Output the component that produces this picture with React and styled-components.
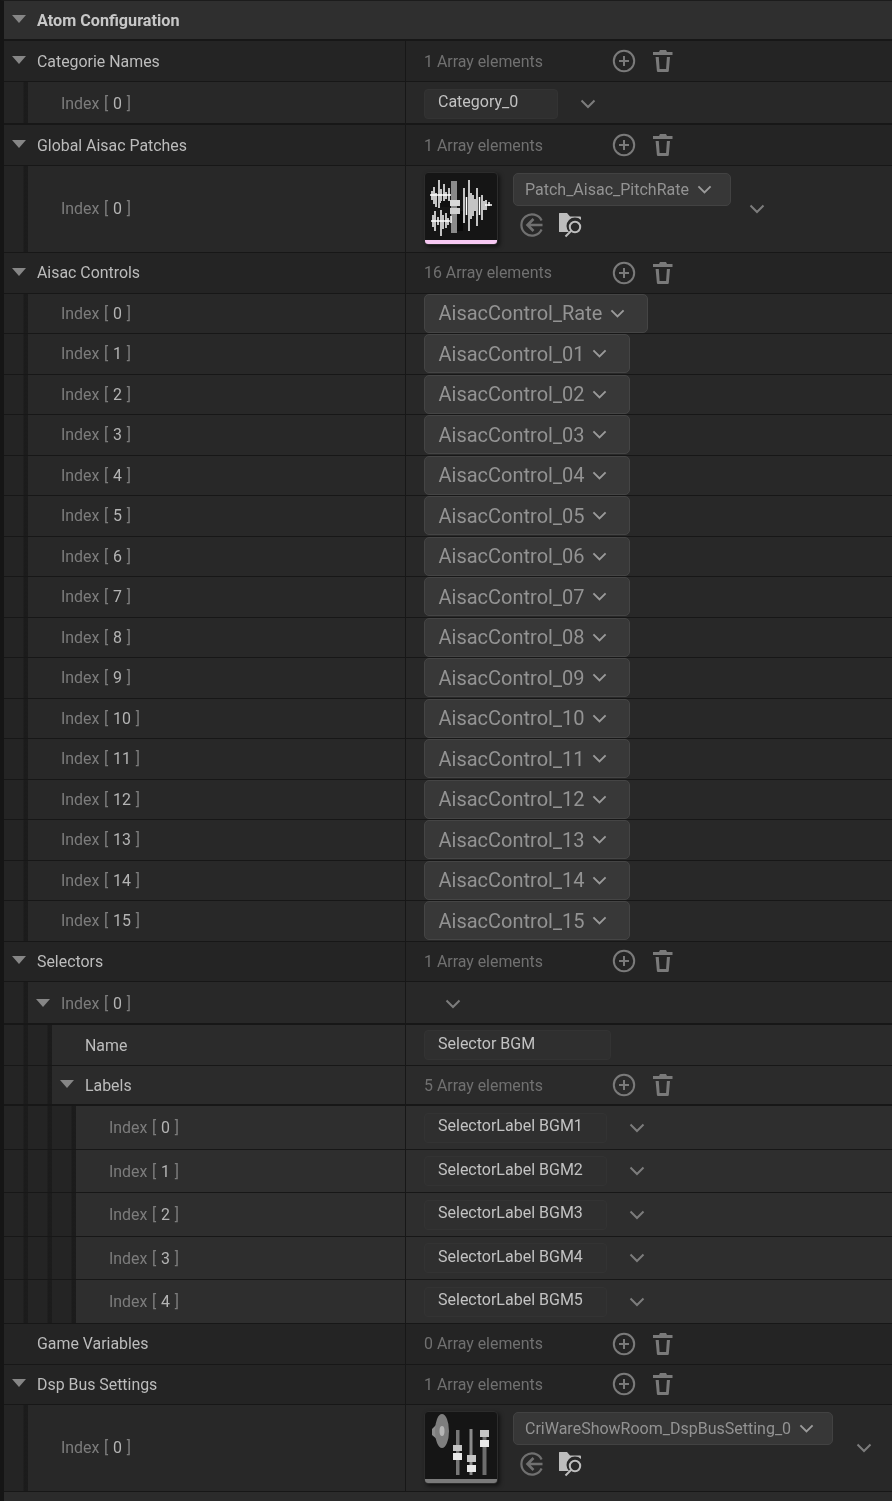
import React from "react";
import styled, { createGlobalStyle } from "styled-components";

const Global = createGlobalStyle`
  html, body { margin: 0; padding: 0; background: #2b2b2b; }
  body { font-family: Roboto, "Liberation Sans", sans-serif; overflow: hidden; }
  * { box-sizing: border-box; }
`;

const Panel = styled.div`
  width: 892px;
  height: 1501px;
  overflow: hidden;
  border-left: 4px solid #151515;
  border-top: 1px solid #1c1c1c;
  display: flex;
  flex-direction: column;
  filter: blur(0.35px);
`;

const Header = styled.div`
  height: 40px;
  flex: none;
  display: flex;
  align-items: center;
  padding-left: 8px;
  background: #2f2f2f;
  border-bottom: 2px solid #171717;
`;

const HeaderTitle = styled.span`
  font-size: 16.2px;
  font-weight: 700;
  color: #c8c8c8;
`;

const Row = styled.div`
  height: ${(p) => p.$h}px;
  flex: none;
  display: flex;
  background: ${(p) => p.$bg};
  border-bottom: ${(p) => p.$line || 1}px solid #171717;
`;

const Gutter = styled.div`
  width: 24px;
  flex: none;
  background: linear-gradient(to right, #242424 0, #242424 19px, #1b1b1b 20px, #1c1c1c 24px);
`;

const NameCell = styled.div`
  flex: 1;
  min-width: 0;
  display: flex;
  align-items: center;
  padding-left: 8px;
  padding-top: ${(p) => p.$nudge || 0}px;
  border-right: 1px solid #171717;
`;

const NameArea = styled.div`
  width: 402px;
  flex: none;
  display: flex;
`;

const Arrow = styled.span`
  width: 0;
  height: 0;
  margin-right: 11px;
  border-left: 7.5px solid transparent;
  border-right: 7.5px solid transparent;
  border-top: 8px solid #868686;
  flex: none;
  margin-top: -2px;
`;

const Spacer = styled.span`
  width: 25px;
  flex: none;
`;

const Label = styled.span`
  font-size: 15.9px;
  color: ${(p) => (p.$index ? "#7c7c7c" : "#bcbcbc")};
  white-space: pre;
  word-spacing: ${(p) => (p.$index ? "0.8px" : "0")};
`;

const Digit = styled.span`
  color: #b4b4b4;
`;

const ValueCell = styled.div`
  flex: 1;
  min-width: 0;
  display: flex;
  align-items: center;
  padding-left: 18px;
  padding-top: ${(p) => p.$nudge || 0}px;
`;

const Count = styled.span`
  width: 188px;
  flex: none;
  font-size: 15.9px;
  color: #707070;
`;

const Tools = styled.div`
  display: flex;
  align-items: center;
  gap: 16px;
`;

const TextBox = styled.div`
  width: ${(p) => p.$w}px;
  height: 30px;
  flex: none;
  display: flex;
  padding: 0 0 4px 13px;
  align-items: center;
  font-size: 16px;
  color: #c2c2c2;
  background: #2f2f2f;
  border: 1px solid #333333;
  border-radius: 4px;
`;

const BigCombo = styled.div`
  height: 39px;
  flex: none;
  display: inline-flex;
  align-items: center;
  gap: 8px;
  padding: 0 21.5px 0 13.5px;
  font-size: 20px;
  color: #939393;
  background: #383838;
  border: 1.5px solid #454545;
  border-radius: 5px;
`;

const SmallCombo = styled.div`
  height: 33px;
  display: inline-flex;
  align-items: center;
  gap: 8px;
  padding: 0 18px 0 11px;
  font-size: 16px;
  color: #939393;
  background: #373737;
  border: 1.5px solid #424242;
  border-radius: 5px;
`;

const Asset = styled.div`
  display: flex;
  align-items: flex-start;
`;

const Thumb = styled.div`
  width: 74px;
  height: 73px;
  flex: none;
  position: relative;
  overflow: hidden;
  background: #151515;
  border: 1px solid #2c2c2c;
  border-radius: 4px;
  box-shadow: 2px 2px 4px rgba(0, 0, 0, 0.55);
`;

const ThumbBar = styled.div`
  position: absolute;
  left: 0;
  right: 0;
  bottom: 0;
  height: 4px;
  background: ${(p) => p.$color};
`;

const AssetBody = styled.div`
  margin: 1px 0 0 15px;
  display: flex;
  flex-direction: column;
  align-items: flex-start;
`;

const AssetTools = styled.div`
  display: flex;
  align-items: center;
  gap: 14px;
  margin: 6px 0 0 7px;
`;

const MoreChevron = styled.span`
  display: inline-flex;
  flex: none;
  margin-left: ${(p) => p.$ml}px;
`;

const Svg = styled.svg`
  display: block;
  flex: none;
`;

const ThumbArt = styled.svg`
  display: block;
  filter: blur(0.4px);
`;

const Chevron = ({ color = "#7c7c7c", w = 16, sw = 2 }) => (
  <Svg width={w} height={w * 0.625} viewBox="0 0 16 10" fill="none" stroke={color} strokeWidth={sw}>
    <path d="M1.5 1.5 L8 8 L14.5 1.5" />
  </Svg>
);

const AddIcon = () => (
  <Svg width="24" height="24" viewBox="0 0 24 24" fill="none" stroke="#7a7a7a" strokeWidth="2">
    <circle cx="12" cy="12" r="10.2" />
    <path d="M12 7 V17 M7 12 H17" />
  </Svg>
);

const TrashIcon = () => (
  <Svg width="22" height="24" viewBox="0 0 22 24" fill="none">
    <path d="M8 1 H14 L15 3 H20.5 V6 H1 V3 H7 Z" fill="#7a7a7a" />
    <path d="M3.6 8 H18 L16.8 22 Q16.7 23 15.7 23 H6 Q5 23 4.9 22 Z M6.8 8 L7.6 20 H14.1 L14.9 8 Z" fill="#7a7a7a" fillRule="evenodd" />
  </Svg>
);

const BackIcon = () => (
  <Svg width="24" height="24" viewBox="0 0 24 24" fill="none" stroke="#707070" strokeWidth="2.2">
    <path d="M21.6 7.5 A10.6 10.6 0 1 0 21.6 16.5" />
    <path d="M22.5 12 H8 M13.5 6 L7.5 12 L13.5 18" strokeWidth="2.6" />
  </Svg>
);

const FolderIcon = () => (
  <Svg width="26" height="26" viewBox="0 0 26 26">
    <path d="M1 1.5 Q1 1 1.5 1 H9 L12 4.5 H22 Q23 4.5 23 5.5 V8 A8 8 0 0 0 11 20 H1.5 Q1 20 1 19.5 Z" fill="#bdbdbd" />
    <circle cx="17" cy="15" r="5.2" fill="none" stroke="#bdbdbd" strokeWidth="2" />
    <path d="M13 19 L7.5 24.5" stroke="#bdbdbd" strokeWidth="2" />
  </Svg>
);

const spikes = [
  // left, upper burst
  [7, 18, 27], [9, 14, 31], [11, 20, 34], [14, 7, 35], [16, 16, 30], [19, 11, 33], [21, 19, 26], [24, 15, 30],
  // left, lower burst
  [8, 42, 54], [10, 38, 58], [13, 44, 52], [16, 37, 63], [18, 42, 56], [21, 40, 55], [23, 45, 52], [26, 43, 50],
  // right wave
  [39, 15, 50], [41.5, 24, 42], [44, 7, 58], [46, 20, 46], [48, 22, 43], [50, 26, 38], [52, 15, 53], [54.5, 24, 42], [57, 22, 47], [59, 28, 37], [61, 27, 37], [64, 29, 33],
];

const WaveThumb = () => (
  <ThumbArt width="72" height="67" viewBox="0 0 72 67">
    <rect x="26" y="8" width="6" height="52" fill="#8a8a8a" />
    <rect x="32" y="38" width="6" height="20" fill="#090909" />
    <g stroke="#ffffff" strokeWidth="1.5">
      {spikes.map(([x, a, b], i) => <path key={i} d={`M${x} ${a} V${b}`} />)}
      <path d="M5 22 H26 M6 48 H25 M60 32 H67" />
    </g>
    <rect x="16" y="28" width="10" height="6" fill="#101010" />
    <rect x="25" y="27" width="10" height="6" fill="#d8d8d8" />
    <rect x="25" y="35" width="10" height="6" fill="#cfcfcf" />
  </ThumbArt>
);

const BusThumb = () => (
  <ThumbArt width="72" height="67" viewBox="0 0 72 67">
    <path d="M7 17 L13 11 V28 L7 23 Z" fill="#8c8c8c" />
    <ellipse cx="17" cy="19" rx="7" ry="17" fill="#7e7e7e" />
    <ellipse cx="17" cy="19" rx="2.5" ry="5" fill="#b5b5b5" />
    <rect x="31" y="18" width="3.5" height="45" fill="#777777" />
    <rect x="44.5" y="17" width="3" height="46" fill="#8a8a8a" />
    <rect x="57.5" y="18" width="4" height="45" fill="#6d6d6d" />
    <rect x="28" y="33" width="9" height="6" fill="#c4c4c4" />
    <rect x="28" y="41" width="9" height="7" fill="#e8e8e8" />
    <rect x="42" y="43" width="9" height="7" fill="#c4c4c4" />
    <rect x="42" y="53" width="9" height="7" fill="#e8e8e8" />
    <rect x="55" y="18" width="9" height="7" fill="#c4c4c4" />
    <rect x="55" y="28" width="9" height="7" fill="#e8e8e8" />
  </ThumbArt>
);

const bgFor = (depth) => ["#242424", "#282828", "#2b2b2b", "#2e2e2e"][depth];

const PropRow = ({ depth = 0, h = 41, line, arrow, index, name, digit, nudge, children }) => (
  <Row $h={h} $bg={bgFor(depth)} $line={line}>
    <NameArea>
      {Array.from({ length: depth }).map((_, i) => <Gutter key={i} />)}
      <NameCell $nudge={nudge}>
        {arrow ? <Arrow /> : <Spacer />}
        {index ? (
          <Label $index>Index [ <Digit>{digit}</Digit> ]</Label>
        ) : (
          <Label>{name}</Label>
        )}
      </NameCell>
    </NameArea>
    <ValueCell $nudge={nudge}>{children}</ValueCell>
  </Row>
);

const ArrayValue = ({ n }) => (
  <>
    <Count>{n} Array elements</Count>
    <Tools>
      <AddIcon />
      <TrashIcon />
    </Tools>
  </>
);

const AssetValue = ({ thumb, bar, label, ml }) => (
  <>
    <Asset>
      <Thumb>
        {thumb}
        <ThumbBar $color={bar} />
      </Thumb>
      <AssetBody>
        <SmallCombo>
          {label}
          <Chevron color="#9a9a9a" w={15} />
        </SmallCombo>
        <AssetTools>
          <BackIcon />
          <FolderIcon />
        </AssetTools>
      </AssetBody>
    </Asset>
    <MoreChevron $ml={ml}><Chevron /></MoreChevron>
  </>
);

const controls = ["Rate", "01", "02", "03", "04", "05", "06", "07", "08", "09", "10", "11", "12", "13", "14", "15"];
const labels = [1, 2, 3, 4, 5];

export default function App() {
  return (
    <Panel>
      <Global />
      <Header>
        <Arrow />
        <HeaderTitle>Atom Configuration</HeaderTitle>
      </Header>

      <PropRow arrow name="Categorie Names"><ArrayValue n={1} /></PropRow>
      <PropRow depth={1} h={43} line={2} nudge={2} index digit={0}>
        <TextBox $w={134}>Category_0</TextBox>
        <MoreChevron $ml={22}><Chevron /></MoreChevron>
      </PropRow>

      <PropRow arrow name="Global Aisac Patches"><ArrayValue n={1} /></PropRow>
      <PropRow depth={1} h={86.5} index digit={0}>
        <AssetValue thumb={<WaveThumb />} bar="#f6c8f2" label="Patch_Aisac_PitchRate" ml={18} />
      </PropRow>

      <PropRow arrow name="Aisac Controls"><ArrayValue n={16} /></PropRow>
      {controls.map((c, i) => (
        <PropRow key={c} depth={1} h={40.5} index digit={i}>
          <BigCombo>
            AisacControl_{c}
            <Chevron color="#9a9a9a" w={15} />
          </BigCombo>
        </PropRow>
      ))}

      <PropRow h={40.5} arrow name="Selectors"><ArrayValue n={1} /></PropRow>
      <PropRow depth={1} h={43} line={2} nudge={2} arrow index digit={0}>
        <MoreChevron $ml={21}><Chevron /></MoreChevron>
      </PropRow>
      <PropRow depth={2} name="Name">
        <TextBox $w={187}>Selector BGM</TextBox>
      </PropRow>
      <PropRow depth={2} h={40.4} line={2} arrow name="Labels"><ArrayValue n={5} /></PropRow>
      {labels.map((n, i) => (
        <PropRow key={n} depth={3} h={43.5} index digit={i}>
          <TextBox $w={183}>SelectorLabel BGM{n}</TextBox>
          <MoreChevron $ml={22}><Chevron /></MoreChevron>
        </PropRow>
      ))}

      <PropRow name="Game Variables"><ArrayValue n={0} /></PropRow>
      <PropRow h={40} arrow name="Dsp Bus Settings"><ArrayValue n={1} /></PropRow>
      <PropRow depth={1} h={87} index digit={0}>
        <AssetValue thumb={<BusThumb />} bar="#7a7a7a" label="CriWareShowRoom_DspBusSetting_0" ml={23} />
      </PropRow>
    </Panel>
  );
}
